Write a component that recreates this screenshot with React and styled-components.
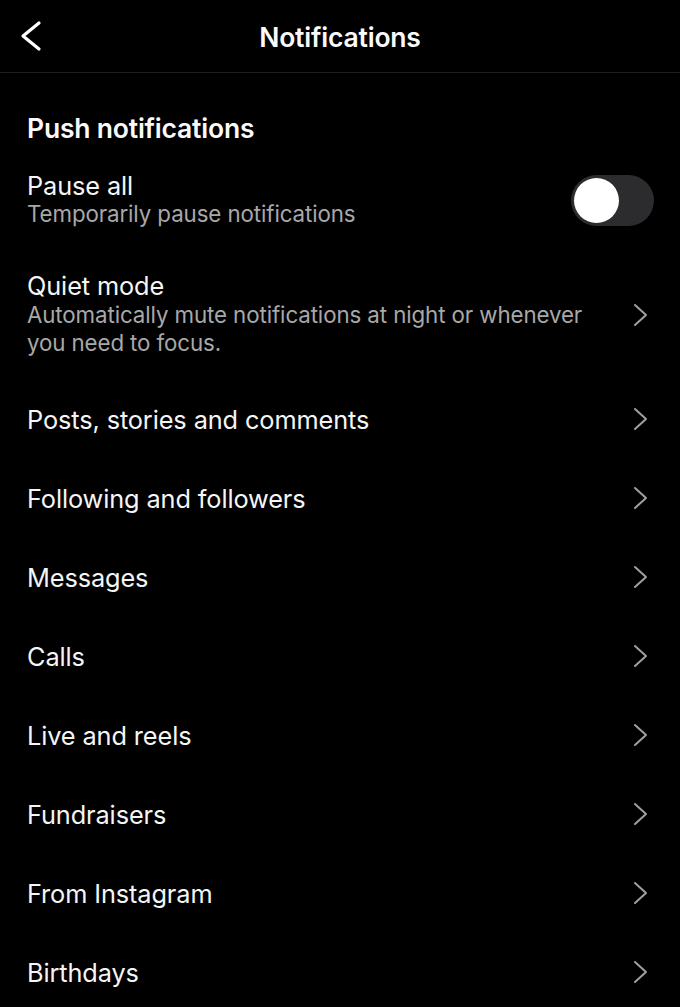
import React, { useState } from 'react'
import styled, { createGlobalStyle } from 'styled-components'

const GlobalStyle = createGlobalStyle`
  html, body {
    margin: 0;
    padding: 0;
    background: #000;
  }
  body {
    font-family: Inter, Roboto, "Liberation Sans", sans-serif;
    color: #f5f5f5;
    -webkit-font-smoothing: antialiased;
  }
`

const Page = styled.div`
  width: 100%;
  min-height: 1007px;
  background: #000;
`

const Header = styled.header`
  position: relative;
  display: flex;
  align-items: center;
  justify-content: center;
  height: 72px;
  border-bottom: 1px solid #1e1e1e;
`

const BackButton = styled.button`
  position: absolute;
  left: 18px;
  top: 20px;
  display: flex;
  padding: 0;
  border: none;
  background: none;
  cursor: pointer;
`

const Title = styled.h1`
  margin: 0;
  padding-top: 2px;
  font-size: 26.5px;
  font-weight: 600;
  letter-spacing: -0.2px;
  color: #fafafa;
`

const SectionTitle = styled.h2`
  margin: 0;
  padding: 40px 27px 7px;
  font-size: 26.5px;
  line-height: 30px;
  font-weight: 600;
  letter-spacing: -0.2px;
  color: #fafafa;
`

const Row = styled.div`
  display: flex;
  align-items: center;
  justify-content: space-between;
  gap: 30px;
  padding: ${({ $tall }) => ($tall ? '22px' : '25px')} 26px
    ${({ $tall }) => ($tall ? '22px' : '25px')} 27px;
  cursor: pointer;
`

const Texts = styled.div`
  display: flex;
  flex-direction: column;
  min-width: 0;
`

const Label = styled.span`
  padding-top: ${({ $tall }) => ($tall ? '0' : '2px')};
  margin-bottom: ${({ $tall }) => ($tall ? '1px' : '0')};
  font-size: 25.3px;
  line-height: 27px;
  letter-spacing: -0.1px;
  color: #f5f5f5;
`

const Sub = styled.span`
  padding-top: ${({ $tall }) => ($tall ? '1px' : '0')};
  font-size: 22.3px;
  line-height: 28px;
  letter-spacing: -0.1px;
  color: #a8a8a8;
`

const Chevron = styled.svg`
  flex-shrink: 0;
  margin-right: 5px;
`

const Track = styled.button`
  position: relative;
  flex-shrink: 0;
  width: 83px;
  height: 51px;
  padding: 0;
  border: none;
  border-radius: 26px;
  background: ${({ $on }) => ($on ? '#0095f6' : '#2c2c2e')};
  cursor: pointer;
`

const Knob = styled.span`
  position: absolute;
  top: 3px;
  left: ${({ $on }) => ($on ? '35px' : '3px')};
  width: 45px;
  height: 45px;
  border-radius: 50%;
  background: #fff;
  transition: left 0.2s;
`

function ChevronRight() {
  return (
    <Chevron width="17" height="24" viewBox="0 0 17 24">
      <polyline
        points="3,2 14,12 3,22"
        fill="none"
        stroke="#a0a0a0"
        strokeWidth="2"
        strokeLinecap="round"
        strokeLinejoin="round"
      />
    </Chevron>
  )
}

const items = [
  'Posts, stories and comments',
  'Following and followers',
  'Messages',
  'Calls',
  'Live and reels',
  'Fundraisers',
  'From Instagram',
  'Birthdays'
]

function App() {
  const [paused, setPaused] = useState(false)

  return (
    <>
      <GlobalStyle />
      <Page>
        <Header>
          <BackButton aria-label="Back">
            <svg width="26" height="32" viewBox="0 0 26 32">
              <polyline
                points="21,3 5,16 21,29"
                fill="none"
                stroke="#fff"
                strokeWidth="3.2"
                strokeLinecap="round"
                strokeLinejoin="round"
              />
            </svg>
          </BackButton>
          <Title>Notifications</Title>
        </Header>

        <SectionTitle>Push notifications</SectionTitle>

        <Row $tall>
          <Texts>
            <Label $tall>Pause all</Label>
            <Sub>Temporarily pause notifications</Sub>
          </Texts>
          <Track $on={paused} onClick={() => setPaused(!paused)}>
            <Knob $on={paused} />
          </Track>
        </Row>

        <Row $tall>
          <Texts>
            <Label $tall>Quiet mode</Label>
            <Sub $tall>Automatically mute notifications at night or whenever you need to focus.</Sub>
          </Texts>
          <ChevronRight />
        </Row>

        {items.map((item) => (
          <Row key={item}>
            <Label>{item}</Label>
            <ChevronRight />
          </Row>
        ))}
      </Page>
    </>
  )
}

export default App
